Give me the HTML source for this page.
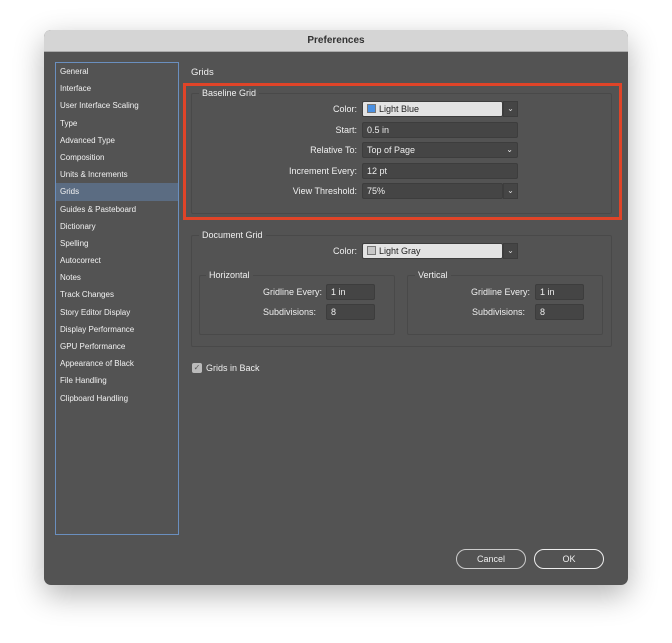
<!DOCTYPE html>
<html><head><meta charset="utf-8"><style>
*{margin:0;padding:0;box-sizing:border-box}
body{width:672px;height:643px;background:#fff;font-family:"Liberation Sans",sans-serif;position:relative;overflow:hidden}
.win{position:absolute;left:44px;top:30px;width:584px;height:555px;background:#535353;border-radius:7px;box-shadow:0 10px 30px rgba(0,0,0,.3);overflow:hidden}
.title{position:absolute;left:0;top:0;width:100%;height:22px;background:#d5d5d5;border-bottom:1px solid #aaa;text-align:center;font-size:10px;font-weight:bold;color:#333;line-height:22px}
.a{position:absolute}
.side{left:11px;top:32px;width:124px;height:473px;border:1px solid #6a8fbf;background:#535353}
.side div{height:17.2px;line-height:17.2px;padding-left:4px;font-size:8px;color:#f2f2f2}
.side .sel{background:#5b6c82}
.t{position:absolute;font-size:9px;color:#f0f0f0;white-space:nowrap}
.r{text-align:right}
.grp{position:absolute;border:1px solid #494949;border-radius:2px}
.lbl{position:absolute;font-size:9px;color:#f0f0f0;background:#535353;padding:0 3px}
.f{position:absolute;height:16px;background:#454545;border:1px solid #3d3d3d;border-radius:2px;font-size:9px;color:#eee;line-height:14px;padding-left:4px}
.lt{background:#e3e3e3;color:#222}
.dd{position:absolute;width:15px;height:16px;background:#454545;border:1px solid #3d3d3d;color:#ddd;font-size:8px;text-align:center;line-height:14px}
.sw{display:inline-block;width:9px;height:9px;vertical-align:-1px;margin-right:3px;border:1px solid #777}
.btn{position:absolute;height:20px;border:1px solid #ccc;border-radius:10px;color:#eee;font-size:9px;text-align:center;line-height:18px}
</style></head><body>
<div class="win">
<div class="title">Preferences</div>
<div class="a side">
<div>General</div><div>Interface</div><div>User Interface Scaling</div><div>Type</div><div>Advanced Type</div><div>Composition</div><div>Units &amp; Increments</div><div class="sel">Grids</div><div>Guides &amp; Pasteboard</div><div>Dictionary</div><div>Spelling</div><div>Autocorrect</div><div>Notes</div><div>Track Changes</div><div>Story Editor Display</div><div>Display Performance</div><div>GPU Performance</div><div>Appearance of Black</div><div>File Handling</div><div>Clipboard Handling</div>
</div>
<div class="t" style="left:147px;top:37px;font-size:9.5px">Grids</div>
<div class="a" style="left:139px;top:53px;width:439px;height:137px;border:3px solid #e04428"></div>
<div class="grp" style="left:147px;top:63px;width:421px;height:121px"></div>
<div class="lbl" style="left:155px;top:58px">Baseline Grid</div>
<div class="t r" style="right:271px;top:74px">Color:</div>
<div class="f lt" style="left:318px;top:71px;width:141px"><span class="sw" style="background:#4a90e2"></span>Light Blue</div><div class="dd" style="left:459px;top:71px">⌄</div>
<div class="t r" style="right:271px;top:95px">Start:</div>
<div class="f" style="left:318px;top:92px;width:156px">0.5 in</div>
<div class="t r" style="right:271px;top:115px">Relative To:</div>
<div class="f" style="left:318px;top:112px;width:156px">Top of Page<span style="position:absolute;right:4px;font-size:8px">⌄</span></div>
<div class="t r" style="right:271px;top:136px">Increment Every:</div>
<div class="f" style="left:318px;top:133px;width:156px">12 pt</div>
<div class="t r" style="right:271px;top:156px">View Threshold:</div>
<div class="f" style="left:318px;top:153px;width:141px">75%</div><div class="dd" style="left:459px;top:153px">⌄</div>

<div class="grp" style="left:147px;top:205px;width:421px;height:112px"></div>
<div class="lbl" style="left:155px;top:200px">Document Grid</div>
<div class="t r" style="right:271px;top:216px">Color:</div>
<div class="f lt" style="left:318px;top:213px;width:141px"><span class="sw" style="background:#c8c8c8"></span>Light Gray</div><div class="dd" style="left:459px;top:213px">⌄</div>
<div class="grp" style="left:155px;top:245px;width:196px;height:60px"></div>
<div class="lbl" style="left:162px;top:240px">Horizontal</div>
<div class="grp" style="left:363px;top:245px;width:196px;height:60px"></div>
<div class="lbl" style="left:371px;top:240px">Vertical</div>
<div class="t r" style="right:306px;top:257px">Gridline Every:</div>
<div class="f" style="left:282px;top:254px;width:49px">1 in</div>
<div class="t r" style="right:312px;top:277px">Subdivisions:</div>
<div class="f" style="left:282px;top:274px;width:49px">8</div>
<div class="t r" style="right:98px;top:257px">Gridline Every:</div>
<div class="f" style="left:491px;top:254px;width:49px">1 in</div>
<div class="t r" style="right:103px;top:277px">Subdivisions:</div>
<div class="f" style="left:491px;top:274px;width:49px">8</div>
<div class="a" style="left:148px;top:333px;width:10px;height:10px;background:#bbb;border-radius:2px;color:#555;font-size:8px;line-height:10px;text-align:center">✓</div>
<div class="t" style="left:162px;top:333px">Grids in Back</div>
<div class="btn" style="left:412px;top:519px;width:70px">Cancel</div>
<div class="btn" style="left:490px;top:519px;width:70px;border-color:#eee;border-width:1.5px">OK</div>
</div>
</body></html>
